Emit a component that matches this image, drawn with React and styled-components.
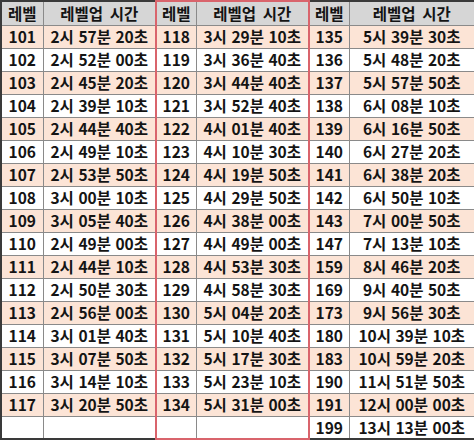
import React from 'react'
import styled, { createGlobalStyle } from 'styled-components'

const GlobalStyle = createGlobalStyle`
  html, body {
    margin: 0;
    padding: 0;
    background: #ffffff;
  }
  body {
    font-family: "Noto Sans CJK KR", "Noto Sans", sans-serif;
  }
`

const Table = styled.table`
  width: 474px;
  border-collapse: collapse;
  table-layout: fixed;
  border: 2px solid #3a3a3a;
  color: #141414;
  font-size: 15.5px;
  font-weight: 700;
`

const HeadRow = styled.tr`
  height: 24px;
  background: #d6d6d6;
`

const Row = styled.tr`
  height: 23px;
  background: ${(p) => (p.$striped ? '#fce4d6' : '#ffffff')};
`

const Cell = styled.td`
  padding: 0;
  text-align: center;
  white-space: nowrap;
  line-height: 1;
  word-spacing: 1px;
  border: 1px solid #8a8a8a;
  ${(p) => p.$redLeft && 'border-left: 2px solid #d9646c;'}
  ${(p) => p.$redRight && 'border-right: 2px solid #d9646c;'}
  ${(p) => p.$redTop && 'border-top: 2px solid #d9646c;'}
  ${(p) => p.$redBottom && 'border-bottom: 2px solid #d9646c;'}
`

const HeadCell = styled(Cell).attrs({ as: 'th' })`
  font-weight: 700;
  word-spacing: 3px;
`

const groups = [
  [
    ['101', '2시 57분 20초'], ['102', '2시 52분 00초'], ['103', '2시 45분 20초'],
    ['104', '2시 39분 10초'], ['105', '2시 44분 40초'], ['106', '2시 49분 10초'],
    ['107', '2시 53분 50초'], ['108', '3시 00분 10초'], ['109', '3시 05분 40초'],
    ['110', '2시 49분 00초'], ['111', '2시 44분 10초'], ['112', '2시 50분 30초'],
    ['113', '2시 56분 00초'], ['114', '3시 01분 40초'], ['115', '3시 07분 50초'],
    ['116', '3시 14분 10초'], ['117', '3시 20분 50초'],
  ],
  [
    ['118', '3시 29분 10초'], ['119', '3시 36분 40초'], ['120', '3시 44분 40초'],
    ['121', '3시 52분 40초'], ['122', '4시 01분 40초'], ['123', '4시 10분 30초'],
    ['124', '4시 19분 50초'], ['125', '4시 29분 50초'], ['126', '4시 38분 00초'],
    ['127', '4시 49분 00초'], ['128', '4시 53분 30초'], ['129', '4시 58분 30초'],
    ['130', '5시 04분 20초'], ['131', '5시 10분 40초'], ['132', '5시 17분 30초'],
    ['133', '5시 23분 10초'], ['134', '5시 31분 00초'],
  ],
  [
    ['135', '5시 39분 30초'], ['136', '5시 48분 20초'], ['137', '5시 57분 50초'],
    ['138', '6시 08분 10초'], ['139', '6시 16분 50초'], ['140', '6시 27분 20초'],
    ['141', '6시 38분 20초'], ['142', '6시 50분 10초'], ['143', '7시 00분 50초'],
    ['147', '7시 13분 10초'], ['159', '8시 46분 20초'], ['169', '9시 40분 50초'],
    ['173', '9시 56분 30초'], ['180', '10시 39분 10초'], ['183', '10시 59분 20초'],
    ['190', '11시 51분 50초'], ['191', '12시 00분 00초'], ['199', '13시 13분 00초'],
  ],
]

const widths = [42, 113, 40, 113, 40, 126]
const rowCount = 18

export default function App() {
  const rows = Array.from({ length: rowCount }, (_, i) => i)
  const last = rowCount - 1

  return (
    <>
      <GlobalStyle />
      <Table>
        <colgroup>
          {widths.map((w, i) => (
            <col key={i} style={{ width: w }} />
          ))}
        </colgroup>
        <thead>
          <HeadRow>
            <HeadCell>레벨</HeadCell>
            <HeadCell>레벨업 시간</HeadCell>
            <HeadCell $redLeft $redTop>레벨</HeadCell>
            <HeadCell $redRight $redTop>레벨업 시간</HeadCell>
            <HeadCell>레벨</HeadCell>
            <HeadCell>레벨업 시간</HeadCell>
          </HeadRow>
        </thead>
        <tbody>
          {rows.map((i) => (
            <Row key={i} $striped={i % 2 === 0}>
              {groups.map((g, gi) => {
                const item = g[i] || ['', '']
                const mid = gi === 1
                return (
                  <React.Fragment key={gi}>
                    <Cell $redLeft={mid} $redBottom={mid && i === last}>{item[0]}</Cell>
                    <Cell $redRight={mid} $redBottom={mid && i === last}>{item[1]}</Cell>
                  </React.Fragment>
                )
              })}
            </Row>
          ))}
        </tbody>
      </Table>
    </>
  )
}
